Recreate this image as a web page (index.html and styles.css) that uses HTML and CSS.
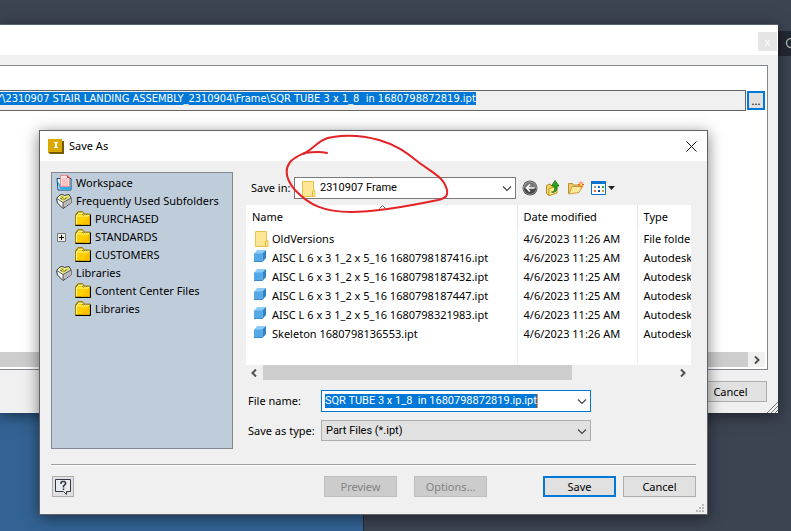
FILE: index.html
```
<!DOCTYPE html>
<html lang="en">
<head>
<meta charset="utf-8">
<title>Save As</title>
<link rel="stylesheet" href="styles.css">
</head>
<body>
<svg class="defs" aria-hidden="true">
  <symbol id="folder" viewBox="0 0 16 16">
    <path d="M.5 15V3.500L2.500 1.500h5l2 2h6V15z" fill="#8a7000"/>
    <path d="M1 4.500 2.500 3l1-1.500h4L9 4h5.500v9.500H1z" fill="#ffd000"/>
    <path d="M1.500 13V5h11l2-1M2 4.500l1.500-2h4" fill="none" stroke="#fff7a0"/>
    <path d="M6 13.500 14.500 5v8.500z" fill="#ffc000"/>
    <path d="M.5 14.500V4l2.500-3.500h4.500L9.500 3h6M7 3l1.500 1.500" fill="none" stroke="#9a8200"/>
    <path d="M.5 14.500h15V3.500" fill="none" stroke="#000"/>
  </symbol>
  <symbol id="book" viewBox="0 0 16 16">
    <path d="M.5 5.500 4 2l2-.5 2.500 1L13 1.500l2 3.500v5l-8 5.500L1.500 10z" fill="#fff" stroke="#333"/>
    <path d="M7 9.500 15 5v5l-8 5z" fill="#bbb"/>
    <path d="M3 4.500 6 2l3 2 3.500-2 1 3L7 8.500z" fill="#e8e060"/>
    <path d="M1 5.500 7 9.500 15 5M7 9.500V15M4 5l3 2 5-3M5 3.500l3 2" fill="none" stroke="#555"/>
    <path d="M4 4h2M7 5h2M10 4h2M6 7h2" stroke="#ffff20"/>
  </symbol>
  <symbol id="part" viewBox="0 0 12 12">
    <path d="M0 4 3 0h9L9 4z" fill="#8dccf8"/>
    <path d="M0 3.500h8.500V12H0z" fill="#55a9e6"/>
    <path d="M8.500 3.500 12 0v8l-3.500 4z" fill="#2f82c4"/>
    <path d="M0 11.500h8.500" fill="none" stroke="#3c8ccc"/>
  </symbol>
  <symbol id="plain-folder" viewBox="0 0 14 16">
    <path d="M.5.500h11v9h1.500v6H.5z" fill="#ffe694" stroke="#e9c34c"/>
    <path d="M10.500 15v-4.500l1.500-1" fill="none" stroke="#dfb530"/>
  </symbol>
  <symbol id="chevron" viewBox="0 0 10 6">
    <path d="M1 .5 5 4.500 9 .5" fill="none" stroke="#444" stroke-width="1.200"/>
  </symbol>
  <symbol id="arrow-right" viewBox="0 0 6 8">
    <path d="M1 .5 4.500 4 1 7.500" fill="none" stroke="#505050" stroke-width="2"/>
  </symbol>
</svg>

<div class="desktop">
  <div class="viewport"></div>
  <div class="dark-strip"><svg viewBox="0 0 13 25"><circle cx="13" cy="12" r="4.500" fill="none" stroke="#aaa" stroke-width="1.500"/></svg></div>

  <section class="window parent">
    <header class="parent-title"><button class="parent-close" aria-label="Close window">x</button></header>
    <div class="parent-panel">
      <div class="path-row">
        <div class="path-box"><input class="selected path" aria-label="Path" value="Y\2310907 STAIR LANDING ASSEMBLY_2310904\Frame\SQR TUBE 3 x 1_8  in 1680798872819.ipt"></div>
        <button class="browse" aria-label="Browse">...</button>
      </div>
      <div class="parent-scroll"><span class="parent-thumb"></span><svg class="arrow"><use href="#arrow-right"/></svg></div>
    </div>
    <footer class="parent-footer"><button class="button">Cancel</button></footer>
    <svg class="parent-grip" viewBox="0 0 11 11"><path d="M0 11 11 0M4 11l7-7M8 11l3-3" stroke="#777" fill="none"/></svg>
  </section>

  <section class="window dialog" role="dialog" aria-labelledby="dialog-title">
    <header class="title-bar">
      <svg class="app-icon" viewBox="0 0 16 15"><path d="M2 2h14v13H2l-2-2z" fill="#735900"/><path d="M0 0h14v13H0z" fill="#dba900"/><path d="M6 3h4v1H9v4h1v1H6V8h1V4H6z" fill="#fff"/></svg>
      <h1 id="dialog-title">Save As</h1>
      <button class="close" aria-label="Close"><svg viewBox="0 0 11 11"><path d="M.5.500l10 10M10.500.500l-10 10" stroke="#111" fill="none"/></svg></button>
    </header>

    <div class="content">
      <ul class="tree">
        <li><svg class="icon" viewBox="0 0 16 16"><path d="M1 3.500h14V15H2z" fill="#e8f8ff" stroke="#147"/><path d="M1 5l3 9.500h11V11H5z" fill="#25aef0"/><path d="M4.500.500h7l2 2v9h-9z" fill="#ffe5e5" stroke="#e88"/><path d="M6 4h5M6 6h6M6 8h6M6 10h6" stroke="#f3a0a0"/><path d="M11 0v3h3z" fill="#e33"/></svg>Workspace</li>
        <li><svg class="icon"><use href="#book"/></svg>Frequently Used Subfolders
          <ul>
            <li><svg class="icon"><use href="#folder"/></svg>PURCHASED</li>
            <li><button class="expander" aria-label="Expand STANDARDS"><svg viewBox="0 0 9 9"><path d="M.5.500h8v8h-8z" fill="#eee" stroke="#777"/><path d="M2 4.500h5M4.500 2v5" stroke="#000"/></svg></button><svg class="icon"><use href="#folder"/></svg>STANDARDS</li>
            <li><svg class="icon"><use href="#folder"/></svg>CUSTOMERS</li>
          </ul>
        </li>
        <li><svg class="icon"><use href="#book"/></svg>Libraries
          <ul>
            <li><svg class="icon"><use href="#folder"/></svg>Content Center Files</li>
            <li><svg class="icon"><use href="#folder"/></svg>Libraries</li>
          </ul>
        </li>
      </ul>

      <div class="main">
        <div class="location">
          <label for="save-in">Save in:</label>
          <div class="combo combo-location">
            <svg class="combo-icon"><use href="#plain-folder"/></svg>
            <select id="save-in"><option>2310907 Frame</option></select>
            <svg class="chevron"><use href="#chevron"/></svg>
          </div>
          <div class="tools">
            <button aria-label="Back"><svg viewBox="0 0 16 16"><circle cx="8" cy="8" r="7.500" fill="#555"/><circle cx="8" cy="8" r="6.300" fill="#777" stroke="#aaa" stroke-width=".8"/><path d="M2 8a6 6 0 0 0 12 0z" fill="#484848"/><path d="M12.500 8h-8M8 4.500 4.500 8 8 11.500" fill="none" stroke="#fff" stroke-width="1.600"/></svg></button>
            <button aria-label="Up one level"><svg viewBox="0 0 16 16"><path d="M1.500 5.500 5 4l1 1.500 5 1V13l-7 2.500-2.500-2z" fill="#f5d565" stroke="#b08a22"/><path d="M4 15.500V8.500l8-2V13z" fill="#ffe98a" stroke="#c09a2e"/><path d="M6.500 12c3 0 3.500-2 3-6H6.500L10 .5 14 6h-2c.5 5-2 7-5.500 6z" fill="#28a61d" stroke="#176c13" stroke-width=".8"/></svg></button>
            <button aria-label="New folder"><svg viewBox="0 0 16 16"><path d="M.5 13.500v-10h4l1 1.500H11v2" fill="#edcb64" stroke="#b99231"/><path d="M1 14 4 6.500h10.500L11 12.500z" fill="#ffe999" stroke="#c9a13c"/><path d="M13 1.500v6M10 4.500h6M11 2.500l4 4M15 2.500l-4 4" stroke="#f04a16"/><circle cx="13" cy="4.500" r="1.200" fill="#ffe54c"/></svg></button>
            <button class="view" aria-label="View menu"><svg class="view-icon" viewBox="0 0 15 14"><path d="M.5.500h14v13H.5z" fill="#fff" stroke="#0873cf"/><path d="M0 0h15v3H0z" fill="#0873cf"/><path d="M3 5h2v2H3z" fill="#999"/><path d="M7 5h2v2H7z" fill="#167bd7"/><path d="M11 5h2v2h-2z" fill="#39a639"/><path d="M3 9h2v2H3z" fill="#ef6b34"/><path d="M7 9h2v2H7z" fill="#183b9e"/><path d="M11 9h2v2h-2z" fill="#d4a51d"/></svg><svg class="view-arrow" viewBox="0 0 7 4"><path d="M0 0h7L3.500 4z" fill="#222"/></svg></button>
          </div>
        </div>

        <div class="file-list">
          <svg class="sort" viewBox="0 0 7 4"><path d="M.5 3.500l3-3 3 3" fill="none" stroke="#555"/></svg>
          <table>
            <colgroup><col class="col-name"><col class="col-date"><col></colgroup>
            <thead><tr><th>Name</th><th>Date modified</th><th>Type</th></tr></thead>
            <tbody>
              <tr><td><svg class="list-folder"><use href="#plain-folder"/></svg>OldVersions</td><td>4/6/2023 11:26 AM</td><td>File folder</td></tr>
              <tr><td><svg class="part"><use href="#part"/></svg>AISC L 6 x 3 1_2 x 5_16 1680798187416.ipt</td><td>4/6/2023 11:25 AM</td><td>Autodesk</td></tr>
              <tr><td><svg class="part"><use href="#part"/></svg>AISC L 6 x 3 1_2 x 5_16 1680798187432.ipt</td><td>4/6/2023 11:25 AM</td><td>Autodesk</td></tr>
              <tr><td><svg class="part"><use href="#part"/></svg>AISC L 6 x 3 1_2 x 5_16 1680798187447.ipt</td><td>4/6/2023 11:25 AM</td><td>Autodesk</td></tr>
              <tr><td><svg class="part"><use href="#part"/></svg>AISC L 6 x 3 1_2 x 5_16 1680798321983.ipt</td><td>4/6/2023 11:25 AM</td><td>Autodesk</td></tr>
              <tr><td><svg class="part"><use href="#part"/></svg>Skeleton 1680798136553.ipt</td><td>4/6/2023 11:26 AM</td><td>Autodesk</td></tr>
              <tr class="filler"><td></td><td></td><td></td></tr>
            </tbody>
          </table>
        </div>
        <div class="list-scroll"><svg class="arrow arrow-left"><use href="#arrow-right"/></svg><span class="list-thumb"></span><svg class="arrow"><use href="#arrow-right"/></svg></div>

        <div class="fields">
          <label for="file-name">File name:</label>
          <div class="combo combo-name">
            <input id="file-name" class="selected" value="SQR TUBE 3 x 1_8  in 1680798872819.ip.ipt">
            <svg class="chevron"><use href="#chevron"/></svg>
          </div>
          <label for="file-type">Save as type:</label>
          <div class="combo combo-type">
            <select id="file-type"><option>Part Files (*.ipt)</option></select>
            <svg class="chevron"><use href="#chevron"/></svg>
          </div>
        </div>
      </div>
    </div>

    <footer class="actions">
      <button class="help" aria-label="Help"><svg viewBox="0 0 16 16"><path d="M.500.500h15v12h-4v3l-3-3h-8z" fill="#e9edf0" stroke="#303848"/><path d="M6 5V3.500L7 2.500h2.500l1 1v1.500L8.500 7v1.500M8.500 9.500v1.500" fill="none" stroke="#303848" stroke-width="1.600"/></svg></button>
      <button class="button" disabled>Preview</button>
      <button class="button" disabled>Options...</button>
      <button class="button primary">Save</button>
      <button class="button">Cancel</button>
    </footer>
    <svg class="grip" viewBox="0 0 8 8"><path d="M6 0h2v2H6zM3 3h2v2H3zM6 3h2v2H6zM0 6h2v2H0zM3 6h2v2H3zM6 6h2v2H6z" fill="#bbb"/></svg>
  </section>

  <svg class="markup" viewBox="0 0 166 82"><path d="M43 19C36 17 28 18 20 19M20 20C31 13 37 4 49 3C68 0 84 3 95 6C116 12 126 22 137 30C151 40 160 44 163 56C164 62 162 64 154 66C130 71 96 78 67 78C40 78 25 71 11 56C0 43 1 34 7 27C12 22 19 20 24 17" fill="none" stroke="#e32326" stroke-width="2" stroke-linecap="round" stroke-linejoin="round"/></svg>
</div>
</body>
</html>
```
FILE: styles.css
```
* { box-sizing: border-box; }
body {
  margin: 0;
  font: 11px/18px "Noto Sans", sans-serif;
  color: #000;
}
button, input, select { font: inherit; color: inherit; margin: 0; border-radius: 0; }
button { padding: 0; }
svg { display: block; flex: none; }
.defs { position: absolute; width: 0; height: 0; }

.desktop { position: relative; min-height: 100vh; overflow: hidden; background: #3c4452; }
.viewport {
  position: absolute; left: 0; bottom: 0; width: 46%; height: 160px;
  background: #336394; border-right: 1px solid #222b38;
}
.dark-strip { position: absolute; right: 0; top: 31px; width: 13px; height: 25px; background: #232933; }
.window { position: absolute; background: #f0f0f0; }

.parent {
  left: 0; right: 13px; top: 24px;
  border-top: 1px solid #5b616c;
  box-shadow: 0 3px 14px rgba(0, 0, 0, .5);
}
.parent-title { display: flex; justify-content: flex-end; height: 30px; padding: 7px 1px; background: #fff; }
.parent-close { width: 19px; height: 19px; border: 0; background: #e5e5e5; color: #fff; line-height: 16px; }
.parent-panel {
  display: flex; flex-direction: column;
  margin: 10px 10px 0 0; height: 305px; padding: 24px 2px 2px 0;
  background: #fff; border: 1px solid #828790; border-left: 0;
}
.path-row { display: flex; align-items: center; gap: 1px; }
.path-box {
  flex: 1; height: 21px; overflow: hidden; padding-top: 1px;
  border: 1px solid #646464; border-left: 0; background: #f0f0f0;
}
.selected {
  display: block; field-sizing: content; padding: 0; border: 0;
  background: #0078d7; color: #fff; outline: 0;
}
.path { height: 13px; margin-left: -4px; font: 11px/13px "DejaVu Sans Condensed", "DejaVu Sans", sans-serif; white-space: pre; }
.browse { width: 18px; height: 19px; border: 2px solid #0078d7; background: #e1e1e1; line-height: 14px; }
.parent-scroll { display: flex; align-items: center; gap: 6px; height: 15px; margin-top: auto; padding-right: 5px; background: #f0f0f0; }
.parent-thumb { flex: 1; height: 15px; background: #cdcdcd; }
.parent-footer { display: flex; justify-content: flex-end; padding: 11px 11px 11px 0; }
.parent-grip { position: absolute; right: 0; bottom: 0; width: 11px; height: 11px; }

.button { width: 73px; height: 21px; border: 1px solid #adadad; background: #e1e1e1; line-height: 18px; }
.button:disabled { border-color: #bfbfbf; background: #ccc; color: #838383; }
.primary { border: 2px solid #0078d7; }

.dialog {
  left: 39px; right: 83px; top: 130px;
  border: 1px solid #606266;
  box-shadow: 0 3px 14px rgba(0, 0, 0, .5);
}
.title-bar { display: flex; align-items: center; gap: 5px; height: 30px; padding: 0 10px 0 8px; background: #fff; }
.title-bar h1 { flex: 1; margin: 0; font-size: 11px; font-weight: 400; }
.app-icon { width: 16px; height: 15px; }
.close { border: 0; background: none; }
.close svg { width: 11px; height: 11px; }

.content { display: flex; gap: 13px; margin: 0 11px; padding: 11px 0 15px; border-bottom: 1px solid #a0a0a0; box-shadow: 0 1px #fff; }
.tree { width: 182px; margin: 0; padding: 1px 4px; border: 1px solid #828790; background: #bfcddb; list-style: none; white-space: nowrap; }
.tree ul { margin: 0; padding: 0 0 0 19px; list-style: none; }
.tree li { position: relative; }
.icon { float: left; width: 16px; height: 16px; margin: 1px 4px 1px 0; }
.expander { position: absolute; left: -18px; top: 5px; border: 0; background: none; }
.expander svg { width: 9px; height: 9px; }

.main { flex: 1; min-width: 0; padding: 5px 0 8px; }
.location { display: flex; align-items: center; }
.location label { width: 48px; padding-left: 5px; white-space: nowrap; }
.combo { position: relative; border: 1px solid #7a7a7a; background: #fff; font-family: Roboto, sans-serif; }
.combo select { appearance: none; display: block; width: 100%; height: 100%; border: 0; outline: 0; background: none; padding: 0 20px 0 4px; }
.chevron { position: absolute; right: 3px; top: 8px; width: 10px; height: 6px; pointer-events: none; }
.combo-icon { position: absolute; left: 7px; top: 3px; width: 14px; height: 16px; pointer-events: none; }
.combo-location { flex: 1; height: 22px; }
.combo-location select { padding-left: 25px; }
.tools { display: flex; align-items: center; gap: 7px; width: 180px; padding-left: 6px; }
.tools button { border: 0; background: none; }
.tools svg { width: 16px; height: 16px; }
.tools .view { display: flex; align-items: center; gap: 2px; }
.tools .view-icon { width: 15px; height: 14px; }
.tools .view-arrow { width: 7px; height: 4px; }

.file-list { position: relative; height: 160px; margin: 6px 5px 0 0; overflow: hidden; background: #fff; }
.sort { position: absolute; left: 133px; top: 0; width: 7px; height: 4px; }
.file-list table { width: 500px; height: 160px; table-layout: fixed; border-collapse: collapse; }
.col-name { width: 271px; }
.col-date { width: 120px; }
th, td { height: 19px; padding: 0 6px; border-right: 1px solid #e8f1fa; font-weight: 400; text-align: left; white-space: nowrap; overflow: hidden; }
th { height: 24px; border-color: #e5e5e5; }
.filler td { height: auto; }
.list-folder { float: left; width: 14px; height: 16px; margin: 1px 3px 0 4px; }
td:first-child { padding-left: 5px; }
.part { float: left; width: 12px; height: 12px; margin: 1px 6px 0 3px; }
.list-scroll { display: flex; align-items: center; height: 15px; margin-right: 5px; padding: 0 5px; }
.list-thumb { height: 15px; width: 71%; margin: 0 auto 0 6px; background: #cdcdcd; }
.arrow { width: 6px; height: 8px; }
.arrow-left { transform: rotate(180deg); }

.fields { display: grid; grid-template-columns: 73px 1fr; row-gap: 8px; align-items: center; margin: 10px 105px 0 2px; }
.combo-name { height: 22px; padding: 3px; border-color: #0078d7; }
.combo-name .selected { height: 14px; line-height: 14px; border-right: 1px solid #ff8728; white-space: pre; }
.combo-type { height: 21px; border-color: #adadad; background: #e1e1e1; }

.actions { display: flex; align-items: center; margin: 0 11px; padding: 11px 0 17px; }
.help { display: grid; place-items: center; width: 22px; height: 21px; margin: 0 auto 0 1px; border: 1px solid #adadad; background: #e1e1e1; }
.help svg { width: 16px; height: 16px; }
.actions .button { margin-left: 7px; }
.actions .button:disabled { margin-left: 0; margin-right: 17px; }
.actions .primary { margin-left: 39px; }
.grip { position: absolute; right: 3px; bottom: 2px; width: 8px; height: 8px; }

.markup { position: absolute; left: 284px; top: 134px; width: 166px; height: 82px; pointer-events: none; }
```
